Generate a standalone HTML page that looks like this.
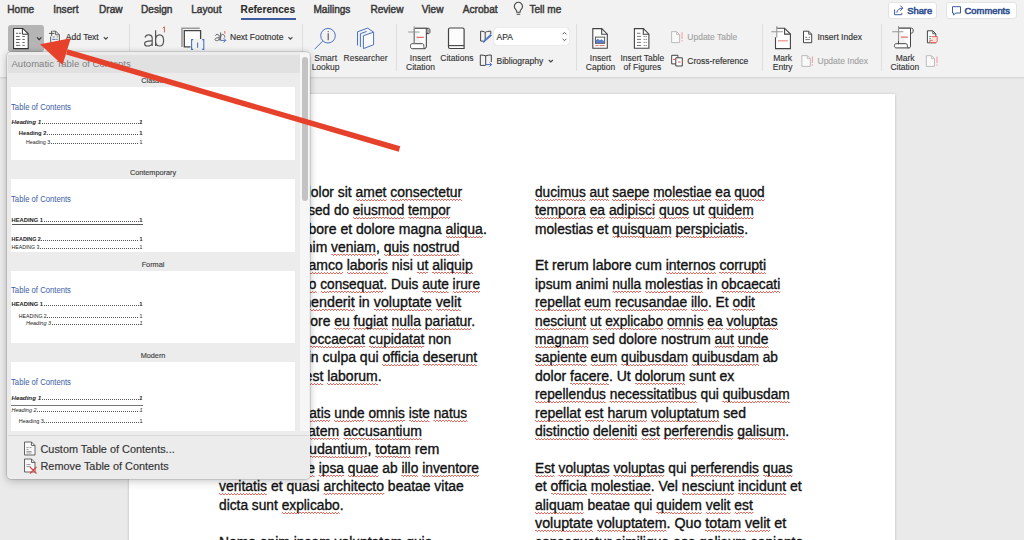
<!DOCTYPE html>
<html><head><meta charset="utf-8">
<style>
*{box-sizing:border-box;margin:0;padding:0}
html,body{width:1024px;height:540px;overflow:hidden}
body{position:relative;background:#eaeaea;font-family:"Liberation Sans",sans-serif;color:#333}
.abs{position:absolute}
.t{position:absolute;line-height:1;white-space:nowrap}
.tab{color:#3a3a3a;-webkit-text-stroke:0.45px #3a3a3a}
.lbl{color:#333;-webkit-text-stroke:0.12px #333}
.gl{color:#a0a0a0;-webkit-text-stroke:0.1px #a0a0a0}
.sep{position:absolute;top:24px;width:1px;height:47px;background:#dedede}
.col .ln{transform-origin:0 0}
.col{position:absolute;font-size:14px;line-height:18.4px;color:#111;-webkit-text-stroke:0.35px #111;white-space:nowrap}
.col u{text-decoration:none;padding-bottom:4px;background-image:repeating-linear-gradient(90deg,#e5695c 0 1.5px,transparent 1.5px 3px),repeating-linear-gradient(90deg,transparent 0 1.5px,#e5695c 1.5px 3px);background-size:100% 1px,100% 1px;background-position:0 15px,0 16px;background-repeat:no-repeat}
.th{position:absolute;left:11px;width:284px;background:#fff}
.tt{color:#3b5ea6;transform:scaleX(0.92);transform-origin:0 0}
.te{position:absolute;line-height:1;white-space:nowrap;display:flex;align-items:baseline;color:#222}
.te i{flex:1;height:1px;margin:0 0.5px;background:repeating-linear-gradient(90deg,#555 0 1px,transparent 1px 2px);font-style:normal}
.sl{color:#444;-webkit-text-stroke:0.15px #444}
.mi{color:#333;-webkit-text-stroke:0.15px #333}
</style></head><body>
<!-- ribbon -->
<div class="abs" style="left:0;top:0;width:1024px;height:77px;background:#f2f2f2"></div>
<div class="abs" style="left:0;top:77px;width:1024px;height:1px;background:#d6d6d6"></div>
<div class="abs" style="left:0;top:78px;width:1024px;height:2px;background:linear-gradient(#e2e2e2,#eaeaea)"></div>
<div class="t tab" style="left:7.30px;top:5.02px;font-size:10.1px;">Home</div>
<div class="t tab" style="left:53.20px;top:5.02px;font-size:10.1px;">Insert</div>
<div class="t tab" style="left:99.00px;top:5.02px;font-size:10.1px;">Draw</div>
<div class="t tab" style="left:141.00px;top:5.02px;font-size:10.1px;">Design</div>
<div class="t tab" style="left:191.20px;top:5.02px;font-size:10.1px;">Layout</div>
<div class="t tab" style="left:240.60px;top:5.02px;font-size:10.1px;font-weight:bold;-webkit-text-stroke:0.1px #2a2a2a;color:#2a2a2a">References</div>
<div class="abs" style="left:241px;top:18px;width:55px;height:2px;background:#3d5c9e"></div>
<div class="t tab" style="left:313.40px;top:5.02px;font-size:10.1px;">Mailings</div>
<div class="t tab" style="left:370.40px;top:5.02px;font-size:10.1px;">Review</div>
<div class="t tab" style="left:421.80px;top:5.02px;font-size:10.1px;">View</div>
<div class="t tab" style="left:462.80px;top:5.02px;font-size:10.1px;">Acrobat</div>
<div class="t tab" style="left:529.40px;top:5.02px;font-size:10.1px;">Tell me</div>
<div class="abs" style="left:888px;top:2px;width:49px;height:17px;background:#fff;border:1px solid #e3e3e3;border-radius:3px"></div>
<div class="abs" style="left:946px;top:2px;width:71px;height:17px;background:#fff;border:1px solid #e3e3e3;border-radius:3px"></div>
<div class="t" style="left:907.20px;top:6.31px;font-size:9.4px;color:#34518f;-webkit-text-stroke:0.6px #34518f">Share</div>
<div class="t" style="left:964.60px;top:6.31px;font-size:9.4px;color:#34518f;-webkit-text-stroke:0.6px #34518f">Comments</div>
<!-- TOC button -->
<div class="abs" style="left:8px;top:25px;width:36px;height:27px;background:#b5b5b5;border-radius:3px"></div>
<div class="abs" style="left:494px;top:28px;width:75px;height:17px;background:#fff;border-radius:3px;box-shadow:0 0 1px rgba(0,0,0,0.3)"></div>
<svg class="abs" style="left:0;top:0" width="1024" height="80" viewBox="0 0 1024 80" fill="none" stroke-linejoin="miter">
 <!-- lightbulb -->
 <path d="M516.6 14.3h3.6M516.8 12.2c0-1.3-.4-2-1.2-2.8a4.1 4.1 0 1 1 5.6 0c-.8.8-1.2 1.5-1.2 2.8z" stroke="#444" stroke-width="1.1"/>
 <!-- share -->
 <path d="M894.6 9.5v5.2h7.2v-1.6" stroke="#3d5c9e" stroke-width="1"/>
 <path d="M896.8 12.8c.4-2.8 2.4-4.6 5.6-4.6M900.3 5.6l2.5 2.6-2.5 2.6" stroke="#3d5c9e" stroke-width="1"/>
 <!-- comments -->
 <path d="M952.5 6.7h8v6.3h-4.6l-2.3 2v-2h-1.1z" stroke="#3d5c9e" stroke-width="1"/>
 <!-- TOC doc -->
 <path d="M13.6 28.4h9.2l5.4 5.4v14.8h-14.6z" fill="#fff" stroke="#333" stroke-width="1.05"/>
 <path d="M22.4 28.6v5.6h5.6" stroke="#333" stroke-width="1"/>
 <path d="M16 33.3h2.2M19 33.3h2M16 36.5h3.6M22.4 36.5h2.4M16 39.5h4.4M22.4 39.5h2.4M16 42.5h3.4M22.4 42.5h2.4M16 45.4h4.4M22.4 45.4h2.4" stroke="#444" stroke-width="0.8"/>
 <path d="M37 37.4l2.2 2.2 2.2-2.2" stroke="#333" stroke-width="1.2"/>
 <!-- add text -->
 <path d="M50.7 36.5v11.5M52.5 31.2h3.3l3.6 3.6v13" stroke="#555" stroke-width="0.95"/>
 <path d="M55.6 31.2v3.6h3.6" stroke="#555" stroke-width="0.9"/>
 <path d="M49 33.4h5.4M51.6 30.8v5.2" stroke="#555" stroke-width="1"/>
 <path d="M52.5 37h2.6M56.5 37h1.6M55.5 39.4h2.6" stroke="#777" stroke-width="0.8"/>
 <path d="M52.3 39.4h3" stroke="#4a72c0" stroke-width="1"/>
 <path d="M103.8 37.2l2 2 2-2" stroke="#444" stroke-width="1.1"/>
 <!-- ab1 -->
 <path d="M145 37.5c.6-1.8 1.9-2.7 3.6-2.7 2.3 0 3.6 1.3 3.6 3.5v7.6M152.2 40.6c-1 .3-2.2.4-3.8.6-2.3.3-3.8 1.2-3.8 2.5 0 1.4 1.1 2.3 2.9 2.3 2.6 0 4.7-1.6 4.7-3.6" stroke="#555" stroke-width="1.2"/>
 <path d="M155.6 30.2v15.8M155.6 40.4c0-3.4 1.6-5.6 4-5.6 2.5 0 4 2.2 4 5.6s-1.5 5.6-4 5.6c-2.4 0-4-2.2-4-5.6" stroke="#555" stroke-width="1.2"/>
 <path d="M162.8 28.2l1.6-1.4v5.6" stroke="#e05a50" stroke-width="1"/>
 <!-- endnote -->
 <path d="M182 47V28.2h17.8" stroke="#9a9a9a" stroke-width="1.6"/>
 <path d="M184.3 30.6h16.3v16.2h-16.3z" fill="#fff" stroke="#444" stroke-width="1.3"/>
 <rect x="190.5" y="39" width="14" height="11" fill="#f2f2f2" stroke="none"/>
 <path d="M193.2 39.6h-1.6v9.8h1.6M202.2 39.6h1.6v9.8h-1.6" stroke="#4a72c0" stroke-width="1.1"/>
 <path d="M197.6 42.4v5.4" stroke="#4a72c0" stroke-width="1.1"/>
 <!-- next footnote ab -->
 <path d="M215.2 35.7c.4-.9 1.1-1.3 2-1.3 1.3 0 2 .7 2 2v4.2M219.2 37.6c-.6.2-1.3.2-2.2.3-1.2.2-2 .7-2 1.5s.6 1.3 1.6 1.3c1.5 0 2.6-.9 2.6-2" stroke="#555" stroke-width="0.9"/>
 <path d="M220.6 32.4v8.2M220.6 37.5c0-1.9.8-3.1 2.1-3.1s2.1 1.2 2.1 3.1" stroke="#555" stroke-width="0.9"/>
 <path d="M224.8 31v2.8" stroke="#e05a50" stroke-width="0.9"/>
 <path d="M221 40.4h4.6M223.6 38.2l2.2 2.2-2.2 2.2" stroke="#4a72c0" stroke-width="1"/>
 <path d="M288.4 37.2l2 2 2-2" stroke="#444" stroke-width="1.1"/>
 <!-- smart lookup -->
 <circle cx="328" cy="35.7" r="7.3" stroke="#4a72c0" stroke-width="1"/>
 <path d="M322.6 41.2l-8 8" stroke="#4a72c0" stroke-width="1"/>
 <path d="M328.2 33.3v7" stroke="#555" stroke-width="1.1"/>
 <circle cx="328.2" cy="31.6" r="0.6" fill="#555"/>
 <!-- researcher -->
 <path d="M357.5 45.4V31.8l10.2-3.7M360.4 47V33.7l6.1-2.2" stroke="#4a72c0" stroke-width="1"/>
 <path d="M367.7 28.1l5.9 4.1" stroke="#4a72c0" stroke-width="1"/>
 <path d="M363.4 35.7l10.2-3.5v12.5l-10.2 3.9z" fill="#fafafa" stroke="#4a72c0" stroke-width="1"/>
 <!-- insert citation -->
 <path d="M414.3 28.3h14c1 0 1.6.7 1.6 1.7v2c0 1-.6 1.6-1.6 1.6h-2.2V46.3c0 1.4-.9 2.4-2.2 2.4" fill="#fff" stroke="#444" stroke-width="1"/>
 <path d="M414.3 28.3h12v18c0 1.4-.9 2.4-2.2 2.4H412.2c-1 0-1.7-.8-1.7-2.2v-1.2c0-.9.7-1.6 1.7-1.6h10c.9 0 1.6.7 1.6 1.6v1c0 1.4.6 2.4 1.4 2.4" fill="#fff" stroke="#444" stroke-width="1"/>
 <path d="M426.3 28.3c1 0 1.7.8 1.7 1.8v1.7c0 1-.6 1.7-1.6 1.7h2" stroke="#444" stroke-width="1"/>
 <path d="M414.3 29v14.6" stroke="#444" stroke-width="1"/>
 <path d="M408.2 32h11.4M414.2 26.3v17.4" stroke="#999" stroke-width="1.1"/>
 <path d="M416.6 37.3h7.2" stroke="#e05a50" stroke-width="1.1"/>
 <!-- citations book -->
 <path d="M450 28h12.6c.9 0 1.5.6 1.5 1.5v19h-14.1c-.9 0-1.5-.6-1.5-1.5V29.5c0-.9.6-1.5 1.5-1.5z" fill="#fcfcfc" stroke="#444" stroke-width="1.2"/>
 <path d="M448.6 45.6h15.4" stroke="#444" stroke-width="1.1"/>
 <!-- style icon -->
 <path d="M480.6 41V31.2c1.8 0 3.4.3 4.6 1.2 1.4-.9 3.2-1.2 5.6-1.2v3M485.2 32.4v8.2M480.6 41c1.8 0 3.2.2 4.3.8" stroke="#444" stroke-width="1"/>
 <path d="M491.6 35.4l-6.4 5.6-1.9 1.4.8-2 6.3-6z" fill="#4a72c0" stroke="#4a72c0" stroke-width="0.8"/>
 <!-- APA chevrons -->
 <path d="M562.6 34.3l1.9-1.9 1.9 1.9M562.6 38.8l1.9 1.9 1.9-1.9" stroke="#555" stroke-width="1"/>
 <!-- bibliography -->
 <path d="M480.3 65.4V55c1.9 0 3.6.2 5.4.8 1.8-.6 3.6-.8 5.6-.8v7M485.7 55.8v9.4M480.3 65.4h5.2" stroke="#444" stroke-width="1"/>
 <path d="M485.4 64.6h6.2M489.6 62.6l2 2-2 2" stroke="#4a72c0" stroke-width="1"/>
 <path d="M548.8 60l2 2 2-2" stroke="#444" stroke-width="1.1"/>
 <!-- insert caption -->
 <path d="M592.8 28.6h9l5.5 5.6v14h-14.5z" fill="#fff" stroke="#444" stroke-width="1.1"/>
 <path d="M601.7 28.8v5.4h5.6" stroke="#444" stroke-width="1.1"/>
 <rect x="595.4" y="37.1" width="9.3" height="6.2" fill="#fff" stroke="#444" stroke-width="0.9"/>
 <path d="M595.9 42.9v-2.6l2-1.6 2 1.5 1.6-.9 2.6 1.8v1.8z" fill="#5b80c8"/>
 <path d="M595.4 45.6h3M599.6 45.6h5" stroke="#e05a50" stroke-width="0.9"/>
 <!-- table of figures -->
 <path d="M634.4 28.6h9l5.5 5.6v14h-14.5z" fill="#fff" stroke="#444" stroke-width="1.1"/>
 <path d="M643.3 28.8v5.4h5.6" stroke="#444" stroke-width="1.1"/>
 <path d="M637 33.3h3.4M637 36.4h4M643.6 36.4h1.2M645.6 36.4h1.2M637 39.4h4M643.6 39.4h1.2M645.6 39.4h1.2M637 42.4h4M643.6 42.4h1.2M645.6 42.4h1.2M637 45.5h4M643.6 45.5h1.2M645.6 45.5h1.2" stroke="#555" stroke-width="0.8"/>
 <!-- update table -->
 <path d="M671.6 31.6h5l3 3v8h-8z" fill="#fafafa" stroke="#b5b5b5" stroke-width="0.9"/>
 <path d="M676.6 31.8v2.8h2.8" stroke="#b5b5b5" stroke-width="0.8"/>
 <path d="M682 32.2v6.8M682 40v1.4" stroke="#f29a9a" stroke-width="1"/>
 <!-- cross ref -->
 <path d="M671.7 55.3h6.2v8.6h-6.2z" fill="#fff" stroke="#444" stroke-width="1"/>
 <path d="M675.8 57.8h6.5v8.2h-6.5z" fill="#fff" stroke="#444" stroke-width="1"/>
 <path d="M673 59.4h2M678 62h2.6" stroke="#e05a50" stroke-width="1"/>
 <!-- mark entry -->
 <path d="M775.5 37.2v11.4h14.9V34.1l-5.8-5.9h-7.8" fill="#fff" stroke="#444" stroke-width="1.1"/>
 <path d="M784.6 28.4v5.7h5.8" stroke="#444" stroke-width="1.1"/>
 <path d="M771.3 31.8h11.6M776.8 26v11.6" stroke="#999" stroke-width="1.1"/>
 <path d="M778 40.8h9.8" stroke="#ec8f86" stroke-width="1.2"/>
 <!-- insert index -->
 <path d="M803.5 31.2h5.2l3 3v8.5h-8.2z" fill="#fff" stroke="#444" stroke-width="1"/>
 <path d="M808.7 31.4v2.8h3" stroke="#444" stroke-width="0.9"/>
 <path d="M805.3 37.3h2M808.6 37.3h1.4M805.3 39.6h4.6" stroke="#555" stroke-width="0.8"/>
 <!-- update index -->
 <path d="M801.9 55.6h5.4l3 3v7.8h-8.4z" fill="#fafafa" stroke="#b5b5b5" stroke-width="0.9"/>
 <path d="M807.3 55.8v2.8h2.9" stroke="#b5b5b5" stroke-width="0.8"/>
 <path d="M812.3 56.4v6.6M812.3 64.2v1.4" stroke="#f29a9a" stroke-width="1"/>
 <!-- mark citation -->
 <path d="M898.5 28.2h13c.9 0 1.6.7 1.6 1.6v1.7c0 .9-.7 1.6-1.6 1.6h-1.1V46c0 1.1-.7 1.8-1.7 1.8" fill="#fff" stroke="#444" stroke-width="1"/>
 <path d="M898.5 28.2h12v18c0 1-.7 1.7-1.7 1.7h-12.6c-1 0-1.7-.8-1.7-1.8v-.7c0-1 .7-1.7 1.7-1.7h9.6c.9 0 1.5.6 1.5 1.5v.8c0 1 .6 1.9 1.5 1.9" fill="#fff" stroke="#444" stroke-width="1"/>
 <path d="M898.5 28.6v15.6" stroke="#444" stroke-width="1"/>
 <path d="M892.2 31.8h11.2M898.5 26v15" stroke="#999" stroke-width="1.1"/>
 <path d="M901.1 37.1h6.8" stroke="#e05a50" stroke-width="1.1"/>
 <!-- small toa icon -->
 <path d="M927.4 30.8h5.4l3 3v9h-8.4z" fill="#fff" stroke="#444" stroke-width="1"/>
 <path d="M932.8 31v2.8h2.9" stroke="#444" stroke-width="0.9"/>
 <path d="M929.2 36.6h2M929.2 38.8h2M929.2 41h1.6" stroke="#555" stroke-width="0.8"/>
 <path d="M931.4 36.6h5.8v4.2c0 1.1-.6 1.8-1.5 1.8h-4.6c-.8 0-1.2-.6-1.2-1.2s.4-1.1 1.2-1.1h1.6" fill="#fbe2df" stroke="#e05a50" stroke-width="0.9"/>
 <!-- small gray icon -->
 <path d="M926.3 55.7h5.2l3 3v7.7h-8.2z" fill="#fafafa" stroke="#b5b5b5" stroke-width="0.9"/>
 <path d="M931.5 55.9v2.8h2.8" stroke="#b5b5b5" stroke-width="0.8"/>
 <path d="M937 56.6v6.6M937 64.4v1.3" stroke="#f29a9a" stroke-width="1"/>
</svg>

<div class="t lbl" style="left:65.80px;top:32.98px;font-size:8.5px;-webkit-text-stroke:0.15px #333">Add Text</div>
<div class="t lbl" style="left:230.00px;top:33.17px;font-size:8.5px;-webkit-text-stroke:0.15px #333">Next Footnote</div>
<div class="sep" style="left:129px;height:27px"></div>
<div class="sep" style="left:302px"></div>
<div class="t lbl" style="left:125.70px;width:400px;text-align:center;top:53.67px;font-size:8.5px;">Smart</div>
<div class="t lbl" style="left:125.60px;width:400px;text-align:center;top:62.87px;font-size:8.5px;">Lookup</div>
<div class="t lbl" style="left:165.50px;width:400px;text-align:center;top:53.67px;font-size:8.5px;">Researcher</div>
<div class="sep" style="left:396px"></div>
<div class="t lbl" style="left:220.50px;width:400px;text-align:center;top:53.57px;font-size:8.5px;">Insert</div>
<div class="t lbl" style="left:220.50px;width:400px;text-align:center;top:63.07px;font-size:8.5px;">Citation</div>
<div class="t lbl" style="left:256.90px;width:400px;text-align:center;top:53.57px;font-size:8.5px;">Citations</div>
<div class="t lbl" style="left:496.50px;top:33.07px;font-size:8.5px;-webkit-text-stroke:0.15px #333">APA</div>
<div class="t lbl" style="left:496.50px;top:57.37px;font-size:8.5px;-webkit-text-stroke:0.15px #333">Bibliography</div>
<div class="sep" style="left:576px"></div>
<div class="t lbl" style="left:400.50px;width:400px;text-align:center;top:53.57px;font-size:8.5px;">Insert</div>
<div class="t lbl" style="left:400.50px;width:400px;text-align:center;top:63.07px;font-size:8.5px;">Caption</div>
<div class="t lbl" style="left:442.30px;width:400px;text-align:center;top:53.57px;font-size:8.5px;">Insert Table</div>
<div class="t lbl" style="left:442.40px;width:400px;text-align:center;top:63.07px;font-size:8.5px;">of Figures</div>
<div class="t gl" style="left:687.30px;top:33.07px;font-size:8.5px;">Update Table</div>
<div class="t lbl" style="left:687.30px;top:57.37px;font-size:8.5px;-webkit-text-stroke:0.15px #333">Cross-reference</div>
<div class="sep" style="left:762px"></div>
<div class="t lbl" style="left:582.60px;width:400px;text-align:center;top:53.57px;font-size:8.5px;">Mark</div>
<div class="t lbl" style="left:582.70px;width:400px;text-align:center;top:63.07px;font-size:8.5px;">Entry</div>
<div class="t lbl" style="left:817.50px;top:33.07px;font-size:8.5px;-webkit-text-stroke:0.15px #333">Insert Index</div>
<div class="t gl" style="left:817.50px;top:57.37px;font-size:8.5px;">Update Index</div>
<div class="sep" style="left:881px"></div>
<div class="t lbl" style="left:705.10px;width:400px;text-align:center;top:53.57px;font-size:8.5px;">Mark</div>
<div class="t lbl" style="left:704.80px;width:400px;text-align:center;top:63.07px;font-size:8.5px;">Citation</div>

<!-- page -->
<div class="abs" style="left:129px;top:94px;width:766px;height:460px;background:#fff;box-shadow:0 0 2px rgba(0,0,0,0.15),0 1px 4px rgba(0,0,0,0.08)"></div>
<div class="col" style="left:219px;top:182.8px">
<div class="ln" style="transform:scaleX(0.9918)">Lorem ipsum dolor sit <u>amet</u> <u>consectetur</u></div>
<div class="ln" style="transform:scaleX(0.9712)"><u>adipiscing</u> elit, sed do <u>eiusmod</u> <u>tempor</u></div>
<div class="ln"><u>incididunt</u> ut labore et dolore magna <u>aliqua</u>.</div>
<div class="ln" style="transform:scaleX(0.9937)">Ut enim ad minim <u>veniam</u>, <u>quis</u> <u>nostrud</u></div>
<div class="ln">exercitation <u>ullamco</u> <u>laboris</u> nisi <u>ut</u> <u>aliquip</u></div>
<div class="ln" style="transform:scaleX(0.9777)">ex ea <u>commodo</u> <u>consequat</u>. Duis <u>aute</u> <u>irure</u></div>
<div class="ln" style="transform:scaleX(1.0198)">dolor in <u>reprehenderit</u> in <u>voluptate</u> <u>velit</u></div>
<div class="ln" style="transform:scaleX(0.9941)">esse cillum dolore <u>eu</u> <u>fugiat</u> <u>nulla</u> <u>pariatur</u>.</div>
<div class="ln" style="transform:scaleX(0.9809)">Excepteur sint <u>occaecat</u> <u>cupidatat</u> non</div>
<div class="ln">proident, sunt in culpa qui <u>officia</u> <u>deserunt</u></div>
<div class="ln">mollit anim id <u>est</u> <u>laborum</u>.</div>
<div class="ln" style="transform:scaleX(0.99)">&nbsp;</div>
<div class="ln" style="transform:scaleX(0.9747)">Sed ut <u>perspiciatis</u> <u>unde</u> <u>omnis</u> <u>iste</u> <u>natus</u></div>
<div class="ln" style="transform:scaleX(1.0034)">error sit <u>voluptatem</u> <u>accusantium</u></div>
<div class="ln" style="transform:scaleX(1.0142)">doloremque <u>laudantium</u>, <u>totam</u> rem</div>
<div class="ln" style="transform:scaleX(0.9849)">aperiam, <u>eaque</u> <u>ipsa</u> <u>quae</u> ab <u>illo</u> <u>inventore</u></div>
<div class="ln" style="transform:scaleX(0.9954)"><u>veritatis</u> et quasi <u>architecto</u> beatae vitae</div>
<div class="ln" style="transform:scaleX(0.9813)">dicta sunt <u>explicabo</u>.</div>
<div class="ln" style="transform:scaleX(0.99)">&nbsp;</div>
<div class="ln" style="transform:scaleX(0.99)">Nemo enim <u>ipsam</u> <u>voluptatem</u> quia</div>
</div>
<div class="col" style="left:535px;top:182.8px">
<div class="ln" style="transform:scaleX(0.9734)"><u>ducimus</u> <u>aut</u> <u>saepe</u> <u>molestiae</u> <u>ea</u> <u>quod</u></div>
<div class="ln" style="transform:scaleX(0.9893)"><u>tempora</u> <u>ea</u> <u>adipisci</u> <u>quos</u> ut <u>quidem</u></div>
<div class="ln" style="transform:scaleX(0.9811)">molestias et <u>quisquam</u> <u>perspiciatis</u>.</div>
<div class="ln" style="transform:scaleX(0.99)">&nbsp;</div>
<div class="ln">Et rerum labore cum <u>internos</u> <u>corrupti</u></div>
<div class="ln" style="transform:scaleX(0.9814)">ipsum animi <u>nulla</u> <u>molestias</u> in <u>obcaecati</u></div>
<div class="ln" style="transform:scaleX(0.9874)"><u>repellat</u> <u>eum</u> <u>recusandae</u> <u>illo</u>. Et <u>odit</u></div>
<div class="ln" style="transform:scaleX(0.9796)"><u>nesciunt</u> <u>ut</u> <u>explicabo</u> <u>omnis</u> <u>ea</u> <u>voluptas</u></div>
<div class="ln" style="transform:scaleX(0.9864)"><u>magnam</u> sed dolore nostrum <u>aut</u> <u>unde</u></div>
<div class="ln" style="transform:scaleX(0.9786)"><u>sapiente</u> <u>eum</u> <u>quibusdam</u> <u>quibusdam</u> ab</div>
<div class="ln">dolor <u>facere</u>. Ut <u>dolorum</u> sunt ex</div>
<div class="ln" style="transform:scaleX(0.9801)"><u>repellendus</u> <u>necessitatibus</u> qui <u>quibusdam</u></div>
<div class="ln"><u>repellat</u> <u>est</u> <u>harum</u> <u>voluptatum</u> sed</div>
<div class="ln" style="transform:scaleX(0.9958)"><u>distinctio</u> <u>deleniti</u> <u>est</u> <u>perferendis</u> <u>galisum</u>.</div>
<div class="ln" style="transform:scaleX(0.99)">&nbsp;</div>
<div class="ln" style="transform:scaleX(0.9787)"><u>Est</u> <u>voluptas</u> <u>voluptas</u> qui <u>perferendis</u> <u>quas</u></div>
<div class="ln">et <u>officia</u> <u>molestiae</u>. Vel <u>nesciunt</u> <u>incidunt</u> et</div>
<div class="ln" style="transform:scaleX(0.9927)"><u>aliquam</u> beatae qui <u>quidem</u> <u>velit</u> <u>est</u></div>
<div class="ln" style="transform:scaleX(1.0181)"><u>voluptate</u> <u>voluptatem</u>. Quo <u>totam</u> <u>velit</u> et</div>
<div class="ln" style="transform:scaleX(0.99)"><u>consequatur</u> <u>similique</u> <u>eos</u> <u>galisum</u> <u>sapiente</u></div>
</div>

<!-- panel -->
<div class="abs" style="left:7px;top:52px;width:303px;height:427px;background:#ececec;border-radius:4px;box-shadow:0 0 0 0.5px rgba(0,0,0,0.2),0 0 6px rgba(0,0,0,0.16),0 4px 10px rgba(0,0,0,0.12)"></div>
<div class="abs" style="left:8px;top:55px;width:292px;height:18px;background:#e1e1e1"></div>
<div class="t" style="left:11.50px;top:59.48px;font-size:9.55px;color:#808080">Automatic Table of Contents</div>
<div class="abs" style="left:300px;top:53px;width:9px;height:378px;background:#f6f6f6"></div>
<div class="abs" style="left:302px;top:57px;width:6px;height:144px;background:#c3c3c3;border-radius:3px"></div>

<div class="t sl" style="left:-47.00px;width:400px;text-align:center;top:77.30px;font-size:7.3px;">Classic</div>
<div class="th" style="top:87px;height:73px"></div>
<div class="t tt" style="left:11.30px;top:102.66px;font-size:8.4px;">Table of Contents</div>
<div class="te" style="left:11.5px;top:119.43px;width:131px;font-size:6.2px;font-weight:bold;font-style:italic">Heading 1<i></i>1</div>
<div class="te" style="left:18.8px;top:131.47px;width:123.7px;font-size:5.8px;font-weight:bold">Heading 2<i></i>1</div>
<div class="te" style="left:26px;top:139.69px;width:116.5px;font-size:5.3px">Heading 3<i></i>1</div>

<div class="t sl" style="left:-47.00px;width:400px;text-align:center;top:168.99px;font-size:7.3px;">Contemporary</div>
<div class="th" style="top:179px;height:73px"></div>
<div class="t tt" style="left:11.30px;top:194.56px;font-size:8.4px;">Table of Contents</div>
<div class="te" style="left:11.5px;top:218.27px;width:131px;font-size:5.8px;font-weight:bold">HEADING 1<i></i>1</div>
<div class="abs" style="left:11.5px;top:224px;width:131px;height:1px;background:#555"></div>
<div class="te" style="left:11.5px;top:237.31px;width:131px;font-size:5.4px;font-weight:bold">HEADING 2<i></i>1</div>
<div class="te" style="left:11.5px;top:245.28px;width:131px;font-size:5.2px">HEADING 3<i></i>1</div>

<div class="t sl" style="left:-47.00px;width:400px;text-align:center;top:260.69px;font-size:7.3px;">Formal</div>
<div class="th" style="top:271px;height:72px"></div>
<div class="t tt" style="left:11.30px;top:286.26px;font-size:8.4px;">Table of Contents</div>
<div class="te" style="left:11.5px;top:302.07px;width:131px;font-size:5.8px;font-weight:bold">HEADING 1<i></i>1</div>
<div class="te" style="left:18.8px;top:313.88px;width:123.7px;font-size:5.2px">HEADING 2<i></i>1</div>
<div class="te" style="left:26px;top:321.02px;width:116.5px;font-size:5.5px;font-style:italic">Heading 3<i></i>1</div>

<div class="t sl" style="left:-47.00px;width:400px;text-align:center;top:352.30px;font-size:7.3px;">Modern</div>
<div class="th" style="top:362px;height:69px"></div>
<div class="t tt" style="left:11.30px;top:377.76px;font-size:8.4px;">Table of Contents</div>
<div class="te" style="left:11.5px;top:394.73px;width:131px;font-size:6.2px;font-weight:bold;font-style:italic">Heading 1<i></i>1</div>
<div class="abs" style="left:11px;top:405px;width:132px;height:1px;background:#777"></div>
<div class="te" style="left:11.5px;top:408.02px;width:131px;font-size:5.5px;font-style:italic">Heading 2<i></i>1</div>
<div class="te" style="left:18.8px;top:419.02px;width:123.7px;font-size:5.5px">Heading 3<i></i>1</div>

<div class="abs" style="left:8px;top:435px;width:301px;height:1px;background:#d9d9d9"></div>
<svg class="abs" style="left:23px;top:441px" width="14" height="15" viewBox="0 0 14 15"><path d="M1.5 1h7l3.5 3.5V14H1.5z" fill="#f8f8f8" stroke="#555" stroke-width="0.9"/><path d="M8.5 1v3.5H12" fill="none" stroke="#555" stroke-width="0.9"/><path d="M3.5 6.5h2M6.5 6.5h2M3.5 8.5h2M3.5 10.5h5M3.5 12h5" stroke="#777" stroke-width="0.7"/></svg>
<div class="t mi" style="left:40.50px;top:443.54px;font-size:10.9px;">Custom Table of Contents...</div>
<svg class="abs" style="left:23px;top:458px" width="16" height="16" viewBox="0 0 16 16"><path d="M1.5 1h7l3.5 3.5V14H1.5z" fill="#f8f8f8" stroke="#555" stroke-width="0.9"/><path d="M8.5 1v3.5H12" fill="none" stroke="#555" stroke-width="0.9"/><path d="M3.5 6.5h4M3.5 8.5h4" stroke="#777" stroke-width="0.7"/><path d="M7 9l6.5 6.5M13.5 9L7 15.5" stroke="#e04040" stroke-width="1.1"/></svg>
<div class="t mi" style="left:40.50px;top:461.04px;font-size:10.9px;">Remove Table of Contents</div>

<!-- arrow -->
<svg class="abs" style="left:0;top:0" width="1024" height="540" viewBox="0 0 1024 540">
  <path d="M66.8 51.8L399.5 149" stroke="#e6412b" stroke-width="5.5"/>
  <path d="M40 44.2L70.8 38.3L62.5 65z" fill="#e6412b"/>
</svg>
</body></html>
